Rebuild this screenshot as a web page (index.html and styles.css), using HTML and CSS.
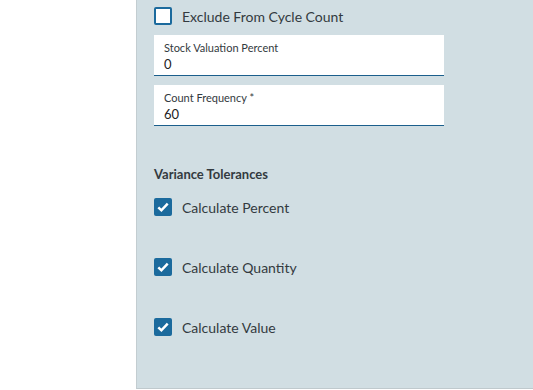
FILE: index.html
```html
<!DOCTYPE html>
<html lang="en">
<head>
  <meta charset="UTF-8">
  <title>Cycle Count Settings</title>
  <link rel="stylesheet" href="styles.css">
</head>
<body>
  <div class="page">
    <div class="side"></div>
    <div class="panel">
      <label class="check-row">
        <span class="box"></span>
        <span class="check-label">Exclude From Cycle Count</span>
      </label>

      <div class="field">
        <div class="field-label">Stock Valuation Percent</div>
        <div class="field-value">0</div>
      </div>
      <div class="field">
        <div class="field-label">Count Frequency *</div>
        <div class="field-value">60</div>
      </div>

      <div class="section-title">Variance Tolerances</div>

      <div class="tolerances">
        <label class="check-row">
          <span class="box checked">
            <svg viewBox="0 0 18 18" width="18" height="18"><path d="M4.3 9.3l3.1 3 6.3-6.6" fill="none" stroke="#fff" stroke-width="2.5"/></svg>
          </span>
          <span class="check-label">Calculate Percent</span>
        </label>
        <label class="check-row">
          <span class="box checked">
            <svg viewBox="0 0 18 18" width="18" height="18"><path d="M4.3 9.3l3.1 3 6.3-6.6" fill="none" stroke="#fff" stroke-width="2.5"/></svg>
          </span>
          <span class="check-label">Calculate Quantity</span>
        </label>
        <label class="check-row">
          <span class="box checked">
            <svg viewBox="0 0 18 18" width="18" height="18"><path d="M4.3 9.3l3.1 3 6.3-6.6" fill="none" stroke="#fff" stroke-width="2.5"/></svg>
          </span>
          <span class="check-label">Calculate Value</span>
        </label>
      </div>
    </div>
  </div>
</body>
</html>
```

FILE: styles.css
```css
html, body {
  margin: 0;
  padding: 0;
  background-color: white;
  font-family: "Lato", "Liberation Sans", sans-serif;
  color: #333a40;
  height: 100%;
  overflow: hidden;
}

.page {
  display: flex;
  height: 390px;
}

.side {
  width: 136px;
  flex-shrink: 0;
  background-color: white;
}

.panel {
  flex: 1;
  height: 389px;
  box-sizing: border-box;
  background-color: #d1dee3;
  border-left: 1px solid #c3cdd1;
  border-bottom: 1px solid #bfc9cd;
  padding: 7px 0 0 17px;
}

.check-row {
  display: flex;
  align-items: center;
  height: 18px;
  cursor: default;
}

.box {
  width: 18px;
  height: 18px;
  box-sizing: border-box;
  border: 2px solid #1b6a9d;
  border-radius: 2px;
  background-color: white;
  flex-shrink: 0;
}

.box.checked {
  border: none;
  background-color: #1b6a9d;
}

.box svg {
  display: block;
}

.check-label {
  margin-left: 10px;
  font-size: 14px;
}

.field {
  width: 290px;
  height: 41px;
  box-sizing: border-box;
  background-color: white;
  border-bottom: 1px solid #1b5f8c;
  padding: 6px 0 0 10px;
  margin-top: 10px;
}

.field + .field {
  margin-top: 9px;
}

.field-label {
  font-size: 11px;
  line-height: 14px;
}

.field-value {
  font-size: 13px;
  line-height: 17px;
  margin-top: 1px;
  color: #222;
}

.section-title {
  margin-top: 40px;
  font-size: 13px;
  font-weight: bold;
  line-height: 16px;
}

.tolerances {
  display: flex;
  flex-direction: column;
  gap: 42px;
  margin-top: 16px;
}
```
